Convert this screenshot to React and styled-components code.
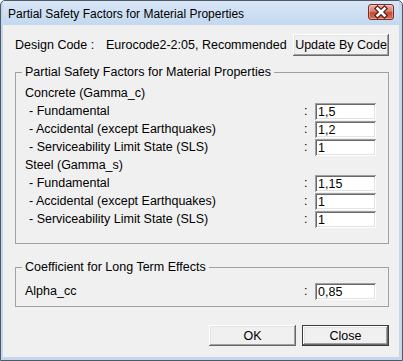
import styled, { createGlobalStyle } from "styled-components";

const GlobalStyle = createGlobalStyle`
  html, body {
    margin: 0;
    padding: 0;
    background: #ffffff;
  }
  body {
    font-family: "Liberation Sans", Arial, sans-serif;
    font-size: 12.5px;
    color: #000;
  }
  * {
    box-sizing: border-box;
  }
`;

const concrete = [
  { label: "- Fundamental", value: "1,5" },
  { label: "- Accidental (except Earthquakes)", value: "1,2" },
  { label: "- Serviceability Limit State (SLS)", value: "1" },
];

const steel = [
  { label: "- Fundamental", value: "1,15" },
  { label: "- Accidental (except Earthquakes)", value: "1" },
  { label: "- Serviceability Limit State (SLS)", value: "1" },
];

function CloseGlyph() {
  return (
    <svg width="26" height="16" viewBox="0 0 26 16">
      <path d="M9.5 4.5 L16.5 11.5 M16.5 4.5 L9.5 11.5" stroke="#5b1a12" strokeWidth="5" strokeLinecap="square" fill="none" />
      <path d="M9.5 4.5 L16.5 11.5 M16.5 4.5 L9.5 11.5" stroke="#ffffff" strokeWidth="2.6" strokeLinecap="square" fill="none" />
    </svg>
  );
}

function ValueRow({ label, value }) {
  return (
    <Row>
      <Label sub>{label}</Label>
      <Colon>:</Colon>
      <Field defaultValue={value} />
    </Row>
  );
}

export default function App() {
  return (
    <>
      <GlobalStyle />
      <Window>
        <TitleBar>
          <Title>Partial Safety Factors for Material Properties</Title>
          <CloseBox>
            <CloseGlyph />
          </CloseBox>
        </TitleBar>
        <Client>
          <DesignRow>
            <CodeLabel>Design Code :</CodeLabel>
            <span>Eurocode2-2:05, Recommended</span>
            <Button wide>Update By Code</Button>
          </DesignRow>

          <Group top={5} bottom={15}>
            <Legend>Partial Safety Factors for Material Properties</Legend>
            <Row>
              <Label>Concrete (Gamma_c)</Label>
            </Row>
            {concrete.map((r, i) => <ValueRow key={"c" + i} {...r} />)}
            <Row>
              <Label>Steel (Gamma_s)</Label>
            </Row>
            {steel.map((r, i) => <ValueRow key={"s" + i} {...r} />)}
          </Group>

          <Group top={8} bottom={6} spaced>
            <Legend>Coefficient for Long Term Effects</Legend>
            <Row>
              <Label>Alpha_cc</Label>
              <Colon>:</Colon>
              <Field defaultValue="0,85" />
            </Row>
          </Group>

          <ButtonBar>
            <Button>OK</Button>
            <Button primary>Close</Button>
          </ButtonBar>
        </Client>
      </Window>
    </>
  );
}

const Window = styled.div`
  width: 403px;
  height: 361px;
  border: 1px solid #4f5a66;
  border-radius: 5px 5px 0 0;
  background: #c3d8ef;
  padding: 0 3px 3px 2px;
  display: flex;
  flex-direction: column;
  overflow: hidden;
`

const TitleBar = styled.div`
  height: 24px;
  flex: none;
  display: flex;
  align-items: center;
  padding-left: 5px;
  padding-right: 5px;
  background: linear-gradient(#d9e7f7, #c3d8ef);
`

const Title = styled.div`
  font-size: 12px;
  color: #000;
  padding-top: 1px;
`

const CloseBox = styled.div`
  margin-left: auto;
  margin-top: -3px;
  width: 26px;
  height: 16px;
  border: 1px solid #7c2b22;
  border-radius: 3px;
  background: linear-gradient(#eab2a6 0%, #d5816f 45%, #c34a32 55%, #d9705a 100%);
  box-shadow: inset 0 0 0 1px rgba(255, 255, 255, 0.35);
  display: flex;
  align-items: center;
  justify-content: center;

  svg {
    display: block;
    margin: -1px;
  }
`

const Client = styled.div`
  flex: 1;
  background: #f0f0f0;
  padding: 9px 10px 11px 12px;
  display: flex;
  flex-direction: column;
`

const DesignRow = styled.div`
  height: 22px;
  display: flex;
  align-items: center;
`

const CodeLabel = styled.span`
  width: 91px;
  flex: none;
`

const Button = styled.button`
  font-family: "Liberation Sans", Arial, sans-serif;
  font-size: 12.5px;
  color: #000;
  height: ${({ wide }) => (wide ? "22px" : "21px")};
  width: ${({ wide }) => (wide ? "96px" : "87px")};
  margin-left: ${({ wide }) => (wide ? "auto" : "0")};
  padding: 0;
  background: #f0f0f0;
  border: ${({ primary }) => (primary ? "1px solid #3c3c3c" : "none")};
  box-shadow:
    inset -1px -1px 0 #696969,
    inset 1px 1px 0 #ffffff,
    inset -2px -2px 0 #a0a0a0,
    inset 2px 2px 0 #e3e3e3;
  cursor: default;
`

const Group = styled.fieldset`
  margin: ${({ spaced }) => (spaced ? "16px" : "9px")} 0 0 0;
  padding: ${({ top }) => top}px 12px ${({ bottom }) => bottom}px 9px;
  border: 1px solid #a0a0a0;
  min-width: 0;
`

const Legend = styled.legend`
  padding: 0 3px;
  margin-left: -3px;
  line-height: 14px;
  height: 14px;
`

const Row = styled.div`
  height: 18px;
  display: grid;
  grid-template-columns: 1fr 12px 61px;
  align-items: center;
`

const Label = styled.span`
  padding-left: ${({ sub }) => (sub ? "4px" : "0")};
  white-space: nowrap;
`

const Colon = styled.span`
  padding-left: 1px;
`

const Field = styled.input`
  width: 61px;
  height: 17px;
  border: none;
  outline: none;
  background: #ffffff;
  padding: 1px 0 0 3px;
  font-family: "Liberation Sans", Arial, sans-serif;
  font-size: 12.5px;
  color: #000;
  box-shadow:
    inset 1px 1px 0 #a0a0a0,
    inset -1px -1px 0 #ffffff,
    inset 2px 2px 0 #696969,
    inset -2px -2px 0 #e3e3e3;
`

const ButtonBar = styled.div`
  margin-top: 18px;
  display: flex;
  justify-content: flex-end;
  gap: 6px;
`
